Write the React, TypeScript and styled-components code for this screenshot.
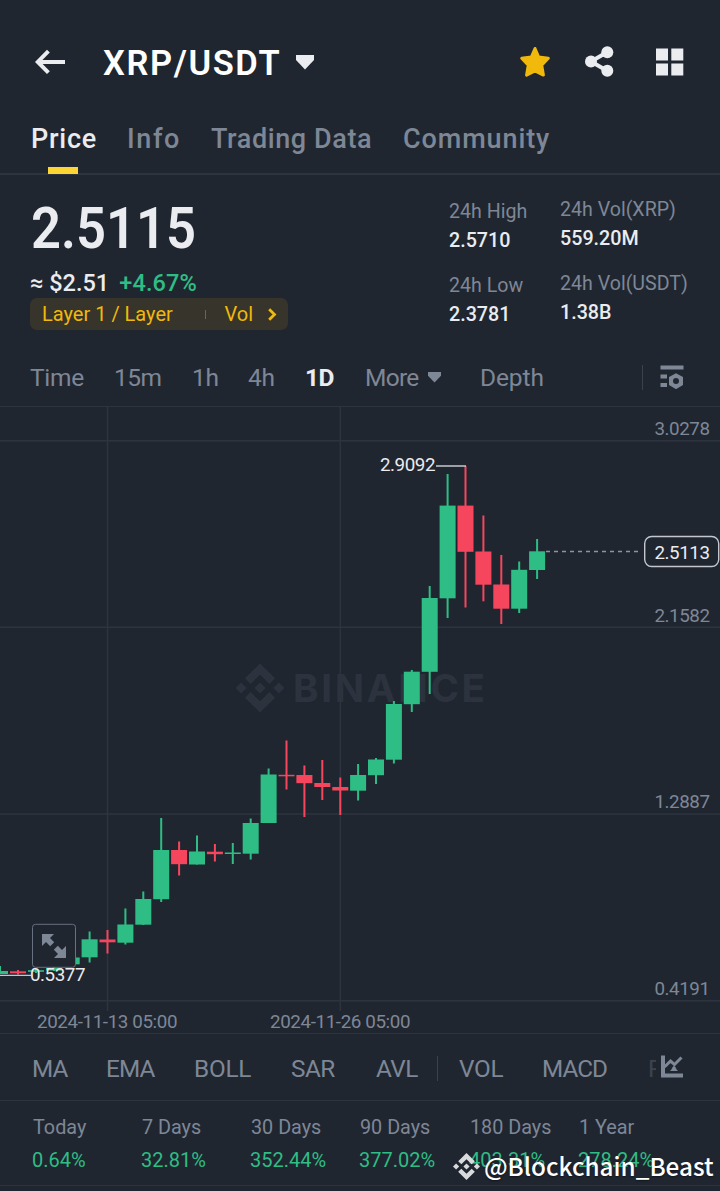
import React from "react";
import styled, { createGlobalStyle } from "styled-components";

const c = {
  bg: "#202630",
  line: "#2d343f",
  text: "#eaecef",
  muted: "#7e8796",
  green: "#2ebd85",
  red: "#f6465d",
  gold: "#f0b90b",
};

const GlobalStyle = createGlobalStyle`
  * { box-sizing: border-box; }
  body { margin: 0; background: ${c.bg}; overflow: hidden; }
`;

const Page = styled.main`
  width: 720px;
  height: 1191px;
  overflow: hidden;
  position: relative;
  display: flex;
  flex-direction: column;
  background: ${c.bg};
  color: ${c.text};
  font-family: Roboto, "Liberation Sans", sans-serif;
  white-space: nowrap;
`;

const Header = styled.header`
  height: 102px;
  padding: 22px 35px 0;
  display: flex;
  align-items: center;
  flex: none;
`;

const Title = styled.h1`
  margin: 2px 15px 0 38px;
  width: 178px;
  font-size: 34.5px;
  line-height: 40px;
  font-weight: 600;
  letter-spacing: 1.6px;
  color: #fff;
`;

const Actions = styled.div`
  margin-left: auto;
  display: flex;
  align-items: center;
  gap: 33px;
`;

const GridIcon = styled.svg`
  margin-left: 3px;
`;

const Tabs = styled.nav`
  height: 73px;
  flex: none;
  display: flex;
  padding-left: 31px;
  border-bottom: 2px solid ${c.line};
`;

const Tab = styled.a<{ $width: number; $gap?: number; $spacing: number; $active?: boolean }>`
  position: relative;
  width: ${(p) => p.$width}px;
  margin-right: ${(p) => p.$gap ?? 30}px;
  padding-top: 21px;
  font-size: 27px;
  line-height: 32px;
  font-weight: 500;
  letter-spacing: ${(p) => p.$spacing}px;
  color: ${(p) => (p.$active ? c.text : c.muted)};
  &::after {
    content: "";
    display: ${(p) => (p.$active ? "block" : "none")};
    position: absolute;
    left: 17px;
    bottom: -1px;
    width: 30px;
    height: 7px;
    background: #fcd535;
  }
`;

const Ticker = styled.section`
  height: 170px;
  flex: none;
  display: grid;
  grid-template-columns: 419px 111px 1fr;
  padding-left: 30px;
`;

const PriceBlock = styled.div`
  padding-top: 21px;
`;

const LastPrice = styled.div`
  padding-left: 1px;
  font-size: 56.5px;
  line-height: 66px;
  font-weight: 600;
  transform: scaleX(0.93);
  transform-origin: left;
`;

const Approx = styled.div`
  margin-top: 7px;
  display: flex;
  gap: 10px;
  font-size: 23.5px;
  line-height: 28px;
  font-weight: 500;
`;

const Change = styled.span`
  letter-spacing: 0.15px;
  color: ${c.green};
`;

const Tag = styled.div`
  margin-top: 1px;
  width: 258px;
  height: 32px;
  padding: 0 11px 0 12px;
  display: flex;
  align-items: center;
  border-radius: 7px;
  background: #37342b;
  color: ${c.gold};
  font-size: 20px;
`;

const TagDivider = styled.i`
  width: 1px;
  height: 9px;
  margin: 0 18px 0 auto;
  background: #80661a;
`;

const Chevron = styled.svg`
  margin: 0 0 0 15px;
`;

const StatColumn = styled.div<{ $top: number }>`
  padding-top: ${(p) => p.$top}px;
  display: flex;
  flex-direction: column;
  gap: 16px;
`;

const StatLabel = styled.div`
  font-size: 19.6px;
  line-height: 29px;
  color: ${c.muted};
`;

const StatValue = styled.div`
  font-size: 19.7px;
  line-height: 29px;
  font-weight: 500;
`;

const Intervals = styled.nav`
  height: 62px;
  flex: none;
  display: flex;
  align-items: center;
  padding: 3px 36px 0 30px;
  border-bottom: 1px solid ${c.line};
  font-size: 24.5px;
`;

const Interval = styled.span<{ $width: number; $active?: boolean; $spacing?: number }>`
  width: ${(p) => p.$width}px;
  padding-top: 1px;
  letter-spacing: ${(p) => p.$spacing ?? -0.3}px;
  color: ${(p) => (p.$active ? c.text : c.muted)};
  font-weight: ${(p) => (p.$active ? 700 : 400)};
`;

const Caret = styled.svg<{ $right?: number }>`
  margin-right: ${(p) => p.$right ?? 0}px;
  flex: none;
`;

const VerticalRule = styled.i<{ $left?: string; $right?: number }>`
  width: 1px;
  height: 25px;
  margin-left: ${(p) => p.$left ?? "0"};
  margin-right: ${(p) => p.$right ?? 0}px;
  background: #3a424e;
  flex: none;
`;

const Chart = styled.svg`
  display: block;
  flex: none;
`;

const Indicators = styled.nav`
  height: 68px;
  flex: none;
  display: flex;
  align-items: center;
  padding: 3px 36px 0 32px;
  border-top: 1px solid ${c.line};
  border-bottom: 1px solid ${c.line};
  font-size: 24.3px;
  color: ${c.muted};
`;

const Indicator = styled.span<{ $width: number; $spacing?: number }>`
  width: ${(p) => p.$width}px;
  letter-spacing: ${(p) => p.$spacing ?? -0.5}px;
`;

const Clipped = styled.span`
  width: 8px;
  overflow: hidden;
  opacity: 0.3;
`;

const IndicatorIcon = styled.svg`
  margin: -4px 0 0 auto;
`;

const Performance = styled.section`
  height: 85px;
  flex: none;
  display: grid;
  grid-template-columns: 109px 109px 109px 110px 109px 1fr;
  padding: 11px 0 0 32px;
  border-bottom: 1px solid ${c.line};
`;

const Period = styled.div`
  padding-left: 1px;
  font-size: 19.8px;
  line-height: 32px;
  color: ${c.muted};
`;

const Return = styled.div`
  font-size: 20px;
  line-height: 32px;
  color: ${c.green};
`;

const Signature = styled.div`
  position: absolute;
  left: 453px;
  top: 1146px;
  height: 40px;
  display: flex;
  align-items: center;
  gap: 4px;
  color: #fff;
  font-family: "Noto Sans CJK SC", sans-serif;
  font-size: 24.3px;
  font-weight: 500;
  line-height: 40px;
  text-shadow: 0 1px 2px rgba(0, 0, 0, 0.5);
`;

type Candle = [x: number, high: number, top: number, bottom: number, low: number, up: 0 | 1];

const candles: Candle[] = [
  [0, 966, 971, 974, 974, 1],
  [18, 970, 971.3, 973.3, 974.5, 0],
  [36, 969, 970.2, 971.8, 973, 1],
  [54, 967, 968, 970.5, 971, 1],
  [71.7, 957, 957.5, 964.3, 965, 1],
  [89.6, 931.5, 939.3, 957.3, 962.5, 1],
  [107.5, 930, 939.5, 942.3, 953.5, 0],
  [125.4, 908.5, 924.5, 942.7, 944.5, 1],
  [143.3, 891.5, 899, 924.7, 925, 1],
  [161.2, 818, 850, 899.2, 902, 1],
  [179.1, 841.5, 850, 864.2, 875.5, 0],
  [197, 835.5, 851.5, 864.5, 864.5, 1],
  [214.9, 844, 851.7, 854.2, 861.5, 0],
  [232.8, 843, 852.5, 854, 864, 1],
  [250.7, 818.5, 823, 853.7, 859.5, 1],
  [268.6, 768.5, 774.5, 823, 823, 1],
  [286.5, 740.5, 774.8, 776.3, 789.5, 0],
  [304.4, 765.5, 775, 783.2, 817, 0],
  [322.3, 760, 783, 787, 800, 0],
  [340.3, 777.5, 787, 790.5, 815, 0],
  [358.1, 764, 775, 790.7, 800.5, 1],
  [376, 758, 759.5, 775.2, 784, 1],
  [393.9, 701, 704, 759.7, 763.5, 1],
  [411.8, 670, 671.7, 704.2, 712, 1],
  [429.7, 586, 598, 671.8, 694, 1],
  [447.6, 474, 505.6, 598.3, 618, 1],
  [465.5, 466, 505.6, 551.8, 607.5, 0],
  [483.4, 515.5, 551.5, 584.7, 601.3, 0],
  [501.3, 555, 584.5, 608.7, 624, 0],
  [519.2, 561.5, 569.8, 608.7, 613, 1],
  [537.1, 539, 551.3, 570, 579, 1],
];

const BinanceMark = ({ x, y, size, fill }: { x?: number; y?: number; size: number; fill: string }) => (
  <svg x={x} y={y} width={size} height={size} viewBox="0 0 48 48" fill={fill}>
    <path d="M24 0 38.8 14.5 33.2 20 24 11 14.8 20 9.2 14.5Z" />
    <path d="M24 48 38.8 33.5 33.2 28 24 37 14.8 28 9.2 33.5Z" />
    <path d="M24 18.5 29.5 24 24 29.5 18.5 24Z" />
    <path d="M5.5 18.5 11 24 5.5 29.5 0 24Z" />
    <path d="M42.5 18.5 48 24 42.5 29.5 37 24Z" />
  </svg>
);

const PriceChart = () => (
  <Chart width="720" height="626" viewBox="0 407 720 626" fontFamily="Roboto, sans-serif" fontSize="18.8">
    <g stroke={c.line} strokeWidth="1.5">
      {[440.7, 627.3, 814, 1000.7].map((y) => (
        <path key={y} d={`M0 ${y}H720`} />
      ))}
      {[107.5, 340.3].map((x) => (
        <path key={x} d={`M${x} 407V1011`} />
      ))}
    </g>
    <BinanceMark x={235.5} y={663.5} size={49} fill="#2c333e" />
    <text x="293" y="702" fill="#2c333e" fontFamily="Inter, sans-serif" fontWeight="700" fontSize="38.5" textLength="192">
      BINANCE
    </text>
    {candles.map(([x, high, top, bottom, low, up]) => (
      <g key={x} fill={up ? c.green : c.red}>
        <rect x={x - 1} y={high} width="2" height={low - high} />
        <rect x={x - 8} y={top} width="16" height={bottom - top} />
      </g>
    ))}
    <rect x="32.5" y="924.3" width="43" height="43" rx="3" fill={c.bg} stroke="#687180" />
    <path
      fill="#7e8796"
      d="M42 934H54L50 938 54.2 942.2 50.2 946.2 46 942 42 946ZM66 958H54L58 954 53.800 949.800 57.800 945.800 62 950 66 946Z"
    />
    <path d="M0 975.3H31M436 466H466" stroke="#c3c7cd" strokeWidth="1.3" />
    <g fill={c.text}>
      <text x="30" y="981" textLength="55.5">0.5377</text>
      <text x="380" y="471" textLength="55.5">2.9092</text>
    </g>
    <path d="M546 551.5H638" stroke="#8d949f" strokeWidth="1.4" strokeDasharray="4 4" />
    <rect x="644.7" y="536.5" width="74" height="30" rx="7" fill={c.bg} stroke="#c3c7cd" strokeWidth="1.4" />
    <text x="654.5" y="559" fill={c.text} textLength="55.5">2.5113</text>
    <g fill={c.muted}>
      <text x="654.5" y="435" textLength="55.5">3.0278</text>
      <text x="654.5" y="622" textLength="55.5">2.1582</text>
      <text x="654.5" y="808" textLength="55.5">1.2887</text>
      <text x="654.5" y="995" textLength="55.5">0.4191</text>
      <text x="37" y="1027.5" textLength="140.5">2024-11-13 05:00</text>
      <text x="270" y="1027.5" textLength="140.5">2024-11-26 05:00</text>
    </g>
  </Chart>
);

const returns = [
  ["Today", "0.64%"],
  ["7 Days", "32.81%"],
  ["30 Days", "352.44%"],
  ["90 Days", "377.02%"],
  ["180 Days", "403.31%"],
  ["1 Year", "278.24%"],
];

export default function App() {
  return (
    <Page>
      <GlobalStyle />
      <Header>
        <svg width="30" height="26" viewBox="0 0 30 26" fill="none" stroke={c.text} strokeWidth="4">
          <path d="M30 13H3M13.4 2.2 2.8 12.9 13.4 23.6" />
        </svg>
        <Title>XRP/USDT</Title>
        <Caret width="18" height="15" viewBox="0 0 18 15" fill={c.text}>
          <path d="M0 0H18V5L9 14.5 0 5Z" />
        </Caret>
        <Actions>
          <svg width="32" height="32" viewBox="0 0 32 32" fill={c.gold} stroke={c.gold} strokeWidth="3" strokeLinejoin="round">
            <path d="M16 2.5 19.7 11.1 29.3 12.3 22.7 19.1 24.4 29.1 16 25 7.6 29.1 9.3 19.1 2.7 12.3 12.3 11.1Z" />
          </svg>
          <svg width="30" height="32" viewBox="0 0 30 32" fill={c.text}>
            <path d="M7 15.500 23 6.300M7 15.500 23 24.700" stroke={c.text} strokeWidth="4" />
            <circle cx="7" cy="15.500" r="6" />
            <circle cx="23.300" cy="6.300" r="6" />
            <circle cx="23.300" cy="24.700" r="6" />
          </svg>
          <GridIcon width="35" height="28" viewBox="0 0 35 28" fill={c.text}>
            <path d="M6 0.5h12v12h-12zM21.3 0.5h12v12h-12zM6 15.5h12v12h-12zM21.3 15.5h12v12h-12z" />
          </GridIcon>
        </Actions>
      </Header>
      <Tabs>
        <Tab $active $width={66} $spacing={0.75}>Price</Tab>
        <Tab $width={54} $spacing={1.6}>Info</Tab>
        <Tab $width={162} $spacing={0.6}>Trading Data</Tab>
        <Tab $width={148} $spacing={0.9}>Community</Tab>
      </Tabs>
      <Ticker>
        <PriceBlock>
          <LastPrice>2.5115</LastPrice>
          <Approx>
            <span>≈ $2.51</span>
            <Change>+4.67%</Change>
          </Approx>
          <Tag>
            <span>Layer 1 / Layer</span>
            <TagDivider />
            <span>Vol</span>
            <Chevron width="9" height="13" viewBox="0 0 9 13" fill="none" stroke={c.gold} strokeWidth="2.8">
              <path d="M1.2 1.2 6.5 6.5 1.2 11.8" />
            </Chevron>
          </Tag>
        </PriceBlock>
        <StatColumn $top={22}>
          <div>
            <StatLabel>24h High</StatLabel>
            <StatValue>2.5710</StatValue>
          </div>
          <div>
            <StatLabel>24h Low</StatLabel>
            <StatValue>2.3781</StatValue>
          </div>
        </StatColumn>
        <StatColumn $top={20}>
          <div>
            <StatLabel>24h Vol(XRP)</StatLabel>
            <StatValue>559.20M</StatValue>
          </div>
          <div>
            <StatLabel>24h Vol(USDT)</StatLabel>
            <StatValue>1.38B</StatValue>
          </div>
        </StatColumn>
      </Ticker>
      <Intervals>
        <Interval $width={84}>Time</Interval>
        <Interval $width={78} $spacing={-0.5}>15m</Interval>
        <Interval $width={56}>1h</Interval>
        <Interval $width={57}>4h</Interval>
        <Interval $width={60} $spacing={-0.6} $active>1D</Interval>
        <Interval $width={63} $spacing={-0.7}>More</Interval>
        <Caret $right={39} width="13" height="11" viewBox="0 0 18 15" fill={c.muted}>
          <path d="M0 0H18V5L9 14.5 0 5Z" />
        </Caret>
        <Interval $width={68} $spacing={-0.1}>Depth</Interval>
        <VerticalRule $left="auto" $right={17} />
        <svg width="24" height="24" viewBox="0 0 24 24" fill={c.muted}>
          <path d="M0.5 0.5h23v4h-23zM0.5 9.5h6.5v4H0.5zM0.5 18h6.5v4H0.5z" />
          <path fillRule="evenodd" d="M16 8.2 23 12v8l-7 4.2L9 20v-8ZM16 13a3 3 0 1 0 0 6 3 3 0 0 0 0-6Z" />
        </svg>
      </Intervals>
      <PriceChart />
      <Indicators>
        <Indicator $width={74} $spacing={-1}>MA</Indicator>
        <Indicator $width={88} $spacing={-0.9}>EMA</Indicator>
        <Indicator $width={97} $spacing={-0.2}>BOLL</Indicator>
        <Indicator $width={85}>SAR</Indicator>
        <Indicator $width={61}>AVL</Indicator>
        <VerticalRule $right={21} />
        <Indicator $width={83} $spacing={-0.3}>VOL</Indicator>
        <Indicator $width={106} $spacing={-1}>MACD</Indicator>
        <Clipped>R</Clipped>
        <IndicatorIcon width="24" height="24" viewBox="0 0 24 24" fill={c.muted}>
          <path d="M1 0.5h4V18.5h18v4H1z" />
          <path d="M4.500 12 10.500 6 14.500 9.500 21.500 2.500" fill="none" stroke={c.muted} strokeWidth="3" />
          <path d="M14 10.500 16.500 13.500h-5ZM12.500 13.300h3l2.500 2.700h-8z" />
        </IndicatorIcon>
      </Indicators>
      <Performance>
        {returns.map(([period, value]) => (
          <div key={period}>
            <Period>{period}</Period>
            <Return>{value}</Return>
          </div>
        ))}
      </Performance>
      <Signature>
        <BinanceMark size={27} fill="#d9dadc" />
        <span>@Blockchain_Beast</span>
      </Signature>
    </Page>
  );
}
